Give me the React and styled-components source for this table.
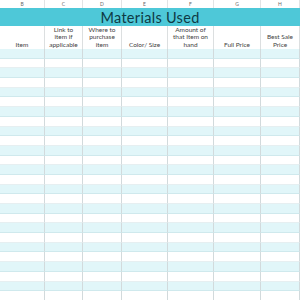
import React from "react";
import styled, { createGlobalStyle } from "styled-components";

const Global = createGlobalStyle`
  html, body { margin: 0; padding: 0; background: #ffffff; }
  body { width: 300px; height: 300px; overflow: hidden; }
`;

const COLS = [45, 38, 39, 46, 46, 47, 39];
const LETTERS = ["B", "C", "D", "E", "F", "G", "H"];
const HEADERS = [
  ["Item"],
  ["Link to", "item if", "applicable"],
  ["Where to", "purchase", "item"],
  ["Color/ Size"],
  ["Amount of", "that Item on", "hand"],
  ["Full Price"],
  ["Best Sale", "Price"],
];
const ROWS = 26;

const Sheet = styled.div`
  display: grid;
  grid-template-columns: ${COLS.map((c) => c + "px").join(" ")};
  width: 300px;
  font-family: Lato, "Noto Sans", sans-serif;
`;

const LetterCell = styled.div`
  box-sizing: border-box;
  height: 8px;
  border-right: 1px solid #e2e4e5;
  background: #ffffff;
  color: #6a6a6a;
  font-size: 5px;
  line-height: 8px;
  text-align: center;
`;

const TitleBar = styled.div`
  grid-column: 1 / -1;
  box-sizing: border-box;
  height: 18px;
  background: #4ec8d8;
  color: #0e3a44;
  font-size: 14.5px;
  font-weight: 400;
  line-height: 19px;
  text-align: center;
  letter-spacing: 0.3px;
`;

const HeaderCell = styled.div`
  box-sizing: border-box;
  height: 23px;
  border-right: 1px solid #dcdfe0;
  display: flex;
  flex-direction: column;
  justify-content: flex-end;
  align-items: center;
  padding-bottom: 1px;
  color: #444444;
  font-size: 6.5px;
  line-height: 7.3px;
  text-align: center;
  white-space: nowrap;
`;

const BodyCell = styled.div`
  box-sizing: border-box;
  height: 9.7px;
  background: ${(p) => (p.$tinted ? "#e1f6f9" : "#ffffff")};
  border-right: 1px solid #d2dadc;
  border-bottom: 1px solid ${(p) => (p.$tinted ? "#cfe9ed" : "#e6eff1")};
`;

export default function App() {
  return (
    <>
      <Global />
      <Sheet>
        {LETTERS.map((l) => (
          <LetterCell key={l}>{l}</LetterCell>
        ))}
        <TitleBar>Materials Used</TitleBar>
        {HEADERS.map((lines, i) => (
          <HeaderCell key={i}>
            {lines.map((t) => (
              <span key={t}>{t}</span>
            ))}
          </HeaderCell>
        ))}
        {Array.from({ length: ROWS }).map((_, r) =>
          COLS.map((_, c) => <BodyCell key={r + "-" + c} $tinted={r % 2 === 0} />)
        )}
      </Sheet>
    </>
  );
}
